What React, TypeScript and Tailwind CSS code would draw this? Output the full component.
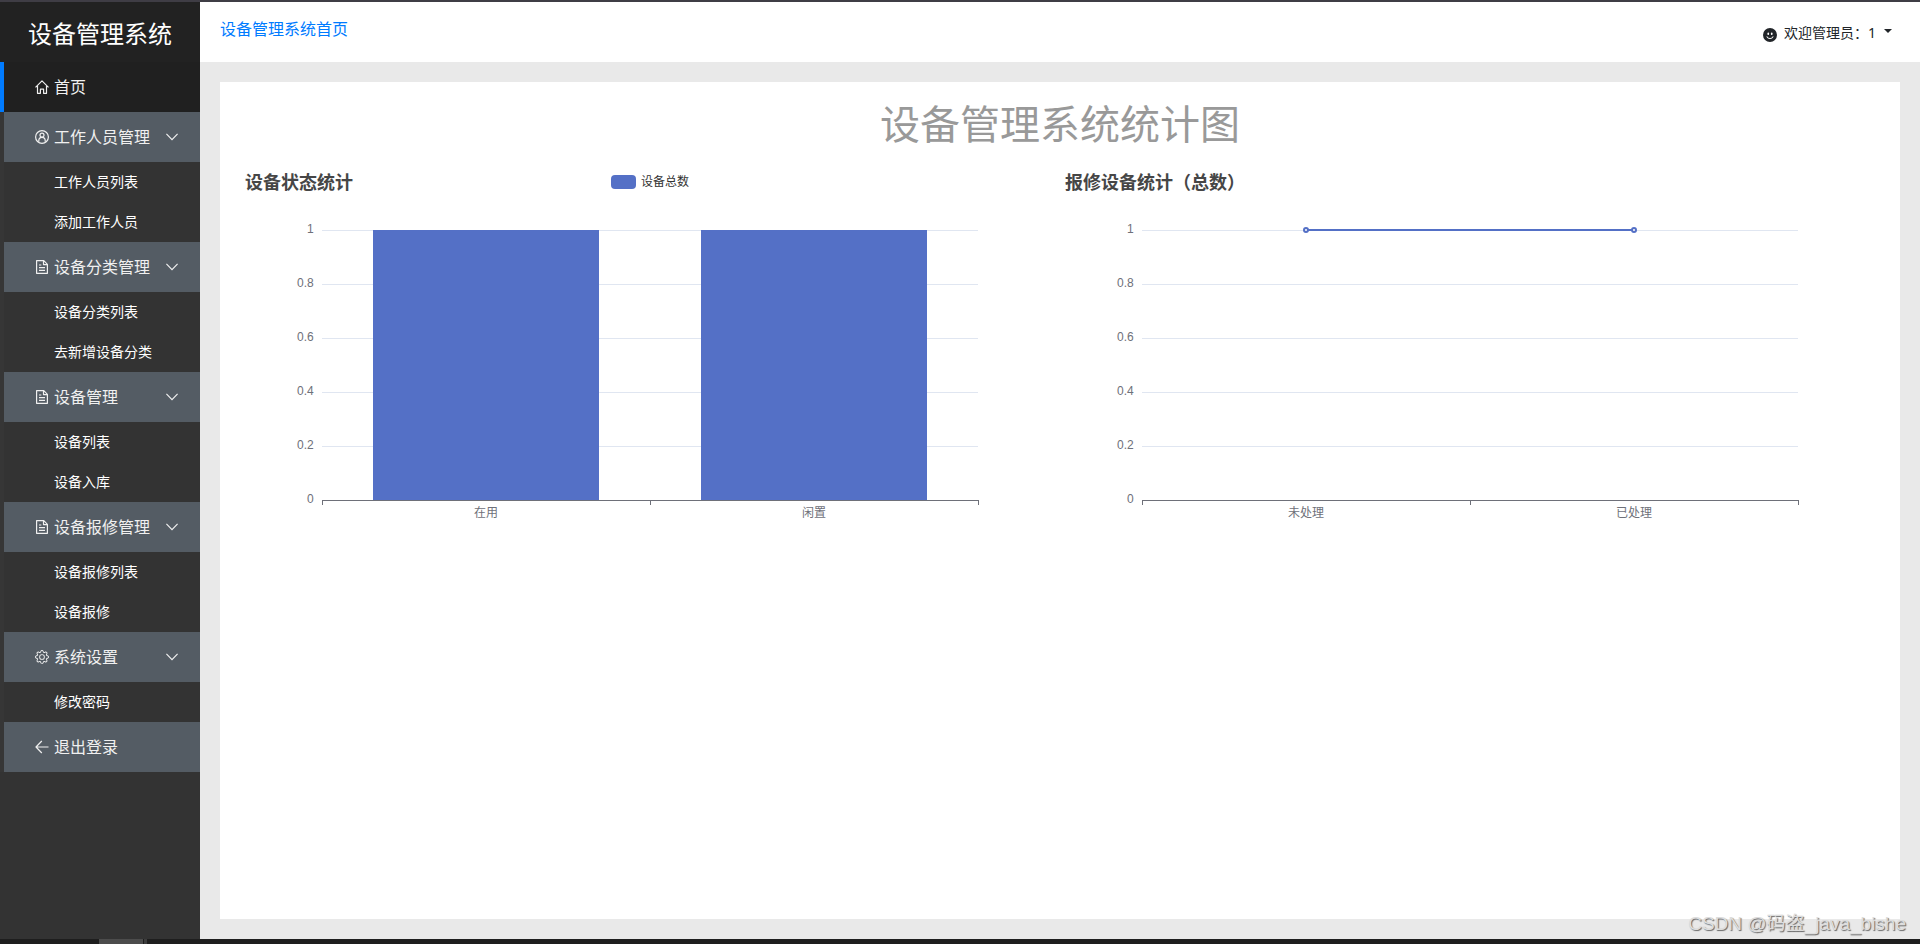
import type { ReactNode } from "react"
import { BsEmojiSmileFill, BsGear } from "react-icons/bs"

function Glyph({ children }: { children: ReactNode }) {
  return (
    <svg
      viewBox="0 0 14 14"
      className="size-[14px]"
      fill="none"
      stroke="currentColor"
      strokeWidth="1.2"
      strokeLinejoin="round"
      aria-hidden="true"
    >
      {children}
    </svg>
  )
}

const HomeIcon = () => (
  <Glyph>
    <path d="M.5 7.4 7 .9l6.500 6.500M2.500 6v7.300h2.900V9.200h3.200v4.100h2.900V6" />
  </Glyph>
)

const UserIcon = () => (
  <Glyph>
    <circle cx="7" cy="7" r="6.400" />
    <circle cx="7" cy="5.200" r="2" />
    <path d="M3.800 11.800V10.600a3.200 3.200 0 0 1 6.400 0v1.200" />
  </Glyph>
)

const FileIcon = () => (
  <Glyph>
    <path d="M1.600.7h7.200l3.600 3.600v9H1.600zM8.500.9v3.700h3.700M4 5h2.300M4 7.700h6M4 10.400h6" />
  </Glyph>
)

const BackIcon = () => (
  <Glyph>
    <path d="M6.800 1 1 7l5.800 6M1 7h12.500" />
  </Glyph>
)

const SettingIcon = () => <BsGear className="size-[14px]" />

function Chevron() {
  return (
    <svg
      viewBox="0 0 12 8"
      className="ml-auto h-2 w-3"
      fill="none"
      stroke="currentColor"
      strokeWidth="1.2"
      aria-hidden="true"
    >
      <path d="m.4.8 5.600 5.800L11.600.8" />
    </svg>
  )
}

type MenuGroup = {
  name: string
  icon: () => ReactNode
  active?: boolean
  children?: string[]
}

const menu: MenuGroup[] = [
  { name: "首页", icon: HomeIcon, active: true },
  { name: "工作人员管理", icon: UserIcon, children: ["工作人员列表", "添加工作人员"] },
  { name: "设备分类管理", icon: FileIcon, children: ["设备分类列表", "去新增设备分类"] },
  { name: "设备管理", icon: FileIcon, children: ["设备列表", "设备入库"] },
  { name: "设备报修管理", icon: FileIcon, children: ["设备报修列表", "设备报修"] },
  { name: "系统设置", icon: SettingIcon, children: ["修改密码"] },
  { name: "退出登录", icon: BackIcon },
]

const ticks = [1, 0.8, 0.6, 0.4, 0.2, 0]
const PLOT_TOP = 60
const PLOT_HEIGHT = 270
const PLOT_BOTTOM = PLOT_TOP + PLOT_HEIGHT

type ChartProps = {
  title: string
  kind: "bar" | "line"
  legend?: string
  data: { label: string; value: number }[]
}

function Chart({ title, kind, legend, data }: ChartProps) {
  // plot area spans 10% .. 90% of the width
  const band = 80 / data.length
  const yOf = (v: number) => PLOT_BOTTOM - v * PLOT_HEIGHT
  const center = (i: number) => 10 + band * (i + 0.5)

  return (
    <section className="relative min-w-0 flex-1 font-['Liberation_Sans','Noto_Sans_CJK_SC',sans-serif]">
      <h2 className="absolute left-[5px] top-[3px] text-lg leading-5 font-bold text-[#464646]">{title}</h2>
      {legend && (
        <div className="absolute inset-x-0 top-1 flex items-center justify-center gap-[5px] text-xs leading-4 text-[#333]">
          <span className="h-[14px] w-[25px] rounded-[4px] bg-[#5470c6]" />
          {legend}
        </div>
      )}
      <svg className="block h-[390px] w-full" role="img" aria-label={title}>
        {ticks.map((t) => (
          <g key={t} shapeRendering="crispEdges">
            <line
              x1="10%"
              x2="90%"
              y1={yOf(t) + 0.5}
              y2={yOf(t) + 0.5}
              stroke={t === 0 ? "#6e7079" : "#e0e6f1"}
            />
            <text x="9%" y={yOf(t) + 3} textAnchor="end" fontSize="12" fill="#6e7079">
              {t}
            </text>
          </g>
        ))}
        {data.map((d, i) => (
          <g key={d.label}>
            {kind === "bar" && (
              <rect
                x={`${center(i) - band * 0.345}%`}
                width={`${band * 0.69}%`}
                y={yOf(d.value)}
                height={d.value * PLOT_HEIGHT}
                fill="#5470c6"
                shapeRendering="crispEdges"
              />
            )}
            <text x={`${center(i)}%`} y={PLOT_BOTTOM + 17} textAnchor="middle" fontSize="12" fill="#6e7079">
              {d.label}
            </text>
          </g>
        ))}
        {[...data, null].map((_, i) => (
          <line
            key={i}
            x1={`${10 + band * i}%`}
            x2={`${10 + band * i}%`}
            y1={PLOT_BOTTOM}
            y2={PLOT_BOTTOM + 5}
            stroke="#6e7079"
            shapeRendering="crispEdges"
          />
        ))}
        {kind === "line" &&
          data.slice(1).map((d, i) => (
            <line
              key={d.label}
              x1={`${center(i)}%`}
              x2={`${center(i + 1)}%`}
              y1={yOf(data[i].value)}
              y2={yOf(d.value)}
              stroke="#5470c6"
              strokeWidth="2"
            />
          ))}
        {kind === "line" &&
          data.map((d, i) => (
            <circle
              key={d.label}
              cx={`${center(i)}%`}
              cy={yOf(d.value)}
              r="2"
              fill="#fff"
              stroke="#5470c6"
              strokeWidth="2"
            />
          ))}
      </svg>
    </section>
  )
}

function Sidebar() {
  return (
    <aside className="w-[200px] shrink-0 bg-[#333]">
      <div className="flex h-[60px] items-center justify-center bg-[#222] pb-2 pt-3 text-2xl text-white">
        设备管理系统
      </div>
      <nav>
        {menu.map((group) => {
          const Icon = group.icon
          return (
            <div key={group.name}>
              <a
                href="#"
                className={`flex h-[50px] items-center gap-[5px] border-l-4 pl-[31px] pr-[22px] text-base text-[#f0f0f0] ${
                  group.active ? "border-[#007bff] bg-[#202020]" : "border-[#363636] bg-[#545c64]"
                }`}
              >
                <Icon />
                {group.name}
                {group.children && <Chevron />}
              </a>
              {group.children?.map((child) => (
                <a
                  key={child}
                  href="#"
                  className="flex h-10 items-center border-l-4 border-[#363636] pl-[50px] text-sm text-white"
                >
                  {child}
                </a>
              ))}
            </div>
          )
        })}
      </nav>
    </aside>
  )
}

export default function App() {
  return (
    <div className="relative flex min-h-screen flex-col bg-[#e9e9e9] font-['Noto_Sans','Noto_Sans_CJK_SC',sans-serif]">
      <div className="h-[2px] bg-[#3f3d45]" />
      <div className="flex flex-1">
        <Sidebar />
        <div className="flex min-w-0 flex-1 flex-col">
          <header className="flex h-[60px] items-center justify-between bg-white pl-5 pr-7">
            <a href="#" className="pb-[6px] text-base text-[#007bff]">
              设备管理系统首页
            </a>
            <button type="button" className="flex items-center pt-px text-sm text-[#212529]">
              <BsEmojiSmileFill className="mr-[7px] mt-1 size-[14px]" />
              欢迎管理员：1
              <span className="mb-1 ml-2 border-x-4 border-t-4 border-x-transparent border-t-[#212529]" />
            </button>
          </header>
          <main className="m-5 flex-1 bg-white px-5">
            <h1 className="pb-4 pt-3 text-center text-[40px] leading-[60px] text-[#999]">设备管理系统统计图</h1>
            <div className="flex">
              <Chart
                title="设备状态统计"
                kind="bar"
                legend="设备总数"
                data={[
                  { label: "在用", value: 1 },
                  { label: "闲置", value: 1 },
                ]}
              />
              <Chart
                title="报修设备统计（总数）"
                kind="line"
                data={[
                  { label: "未处理", value: 1 },
                  { label: "已处理", value: 1 },
                ]}
              />
            </div>
          </main>
        </div>
      </div>
      <div className="flex h-[5px] gap-px bg-[#1e1e1e] pl-[99px]">
        <span className="w-11 bg-[#4c4c4c]" />
        <span className="w-[3px] bg-[#3c3c3c]" />
      </div>
      <div className="absolute bottom-2 right-[14px] font-['Liberation_Sans','Noto_Sans_CJK_SC',sans-serif] text-[19px] leading-6 text-[#ddd] [text-shadow:1px_1px_1px_#666]">
        CSDN @码盗_java_bishe
      </div>
    </div>
  )
}
